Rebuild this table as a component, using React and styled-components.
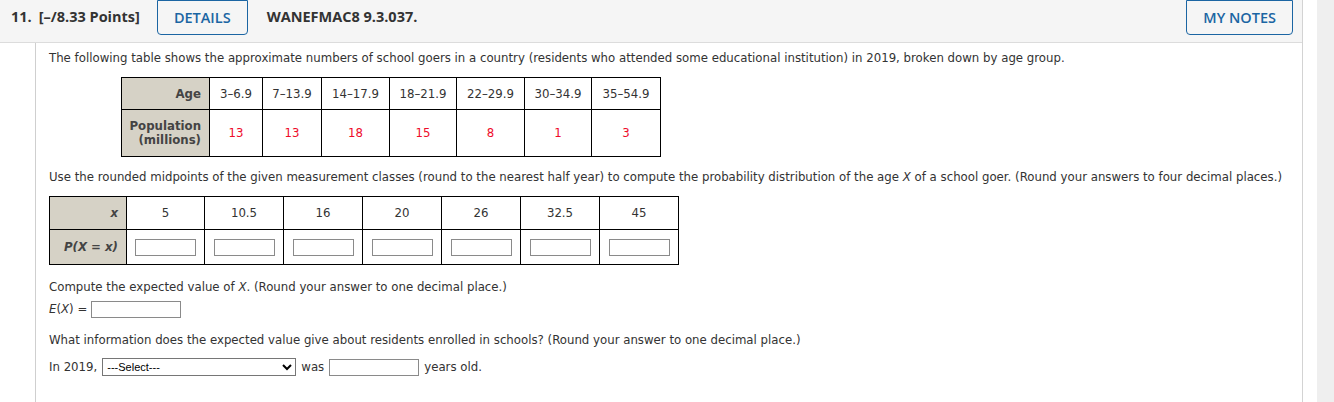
import React from "react";
import styled, { createGlobalStyle } from "styled-components";

const Global = createGlobalStyle`
  html, body { margin: 0; padding: 0; background: #fff; }
  body { font-family: "DejaVu Sans", Verdana, sans-serif; color: #333; }
`;

const Page = styled.div`
  display: flex;
  height: 402px;
  overflow: hidden;
`;

const Main = styled.div`
  width: 1302px;
  border-right: 1px solid #d3d3d3;
  display: flex;
  flex-direction: column;
`;

const Side = styled.div`
  flex: 1;
  margin-left: 14px;
  background: #efefef;
`;

const Header = styled.div`
  height: 42px;
  background: #f5f5f5;
  border-bottom: 1px solid #dcdcdc;
  display: flex;
  align-items: flex-start;
  font-family: "Open Sans", sans-serif;
  font-size: 14.5px;
  font-weight: 700;
  color: #333;
`;

const HeadText = styled.span`
  line-height: 33px;
  margin-left: ${(p) => p.$ml || 0}px;
`;

const OutlineButton = styled.button`
  height: 35px;
  margin-left: ${(p) => p.$ml || 0}px;
  margin-right: ${(p) => p.$mr || 0}px;
  padding: 0 16px;
  background: transparent;
  border: 1px solid #1b65a3;
  border-radius: 0 0 4px 4px;
  color: #1b65a3;
  font-family: "Open Sans", sans-serif;
  font-size: 14.5px;
  font-weight: 600;
`;

const Spacer = styled.div`
  flex: 1;
`;

const Body = styled.div`
  flex: 1;
  margin-left: 35px;
  border-left: 1px solid #cfcfcf;
  padding: 7px 0 0 13px;
  font-size: 11.75px;
`;

const Para = styled.p`
  margin: 0;
  line-height: 16px;
  white-space: nowrap;
  margin-top: ${(p) => p.$mt || 0}px;
`;

const Grid = styled.table`
  border-collapse: collapse;
  table-layout: fixed;
  width: ${(p) => p.$w}px;
  margin-left: ${(p) => p.$ml || 0}px;
  margin-top: ${(p) => p.$mt || 0}px;
  font-size: 11.75px;
`;

const Col = styled.col`
  width: ${(p) => p.$w}px;
`;

const Cell = styled.td`
  border: 1px solid #000;
  text-align: center;
  padding: 0;
  height: ${(p) => p.$h}px;
  color: ${(p) => (p.$red ? "#ee0c2a" : "#333")};
`;

const HeadCell = styled.th`
  border: 1px solid #000;
  background: #d6d2c6;
  text-align: right;
  padding: 0 8px 0 4px;
  font-weight: 700;
  color: #444;
  line-height: 14px;
  height: ${(p) => p.$h}px;
  font-style: ${(p) => (p.$italic ? "italic" : "normal")};
`;

const Box = styled.input`
  box-sizing: border-box;
  width: ${(p) => p.$w}px;
  height: 17px;
  border: 1px solid #8a8a8a;
  padding: 0;
  margin: 0;
  vertical-align: middle;
  background: #fff;
`;

const Line = styled.div`
  display: flex;
  align-items: center;
  gap: ${(p) => p.$gap || 4}px;
  margin-top: ${(p) => p.$mt || 0}px;
  height: 18px;
`;

const Select = styled.select`
  width: 194px;
  height: 18px;
  font-family: "Liberation Sans", Arial, sans-serif;
  font-size: 11px;
  border: 1px solid #767676;
  padding: 0;
  color: #000;
  background: #fff;
`;

const ages = [
  ["3–6.9", 53, 13],
  ["7–13.9", 59, 13],
  ["14–17.9", 68, 18],
  ["18–21.9", 67, 15],
  ["22–29.9", 68, 8],
  ["30–34.9", 67, 1],
  ["35–54.9", 69, 3],
];

const xs = [
  ["5", 78],
  ["10.5", 79],
  ["16", 79],
  ["20", 79],
  ["26", 79],
  ["32.5", 79],
  ["45", 79],
];

export default function App() {
  return (
    <>
      <Global />
      <Page>
        <Main>
          <Header>
            <HeadText $ml={11}>11.</HeadText>
            <HeadText $ml={7}>[–/8.33 Points]</HeadText>
            <OutlineButton $ml={17}>DETAILS</OutlineButton>
            <HeadText $ml={19}>WANEFMAC8 9.3.037.</HeadText>
            <Spacer />
            <OutlineButton $mr={9}>MY NOTES</OutlineButton>
          </Header>
          <Body>
            <Para>
              The following table shows the approximate numbers of school goers in a
              country (residents who attended some educational institution) in 2019,
              broken down by age group.
            </Para>
            <Grid $w={540} $ml={72} $mt={11}>
              <colgroup>
                <Col $w={88} />
                {ages.map(([a, w]) => (
                  <Col key={a} $w={w} />
                ))}
              </colgroup>
              <tbody>
                <tr>
                  <HeadCell $h={31}>Age</HeadCell>
                  {ages.map(([a]) => (
                    <Cell key={a} $h={31}>{a}</Cell>
                  ))}
                </tr>
                <tr>
                  <HeadCell $h={46}>
                    Population
                    <br />
                    (millions)
                  </HeadCell>
                  {ages.map(([a, , n]) => (
                    <Cell key={a} $h={46} $red>{n}</Cell>
                  ))}
                </tr>
              </tbody>
            </Grid>
            <Para $mt={12}>
              Use the rounded midpoints of the given measurement classes (round to the
              nearest half year) to compute the probability distribution of the age{" "}
              <i>X</i> of a school goer. (Round your answers to four decimal places.)
            </Para>
            <Grid $w={629} $mt={11}>
              <colgroup>
                <Col $w={77} />
                {xs.map(([x, w]) => (
                  <Col key={x} $w={w} />
                ))}
              </colgroup>
              <tbody>
                <tr>
                  <HeadCell $h={32} $italic>x</HeadCell>
                  {xs.map(([x]) => (
                    <Cell key={x} $h={32}>{x}</Cell>
                  ))}
                </tr>
                <tr>
                  <HeadCell $h={34} $italic>
                    P(X = x)
                  </HeadCell>
                  {xs.map(([x]) => (
                    <Cell key={x} $h={34}>
                      <Box $w={61} />
                    </Cell>
                  ))}
                </tr>
              </tbody>
            </Grid>
            <Para $mt={14}>
              Compute the expected value of <i>X</i>. (Round your answer to one decimal
              place.)
            </Para>
            <Line $mt={5} $gap={4}>
              <span>
                <i>E</i>(<i>X</i>) =
              </span>
              <Box $w={90} />
            </Line>
            <Para $mt={14}>
              What information does the expected value give about residents enrolled in
              schools? (Round your answer to one decimal place.)
            </Para>
            <Line $mt={10} $gap={5}>
              <span>In 2019,</span>
              <Select defaultValue="">
                <option value="">---Select---</option>
              </Select>
              <span>was</span>
              <Box $w={90} />
              <span>years old.</span>
            </Line>
          </Body>
        </Main>
        <Side />
      </Page>
    </>
  );
}
